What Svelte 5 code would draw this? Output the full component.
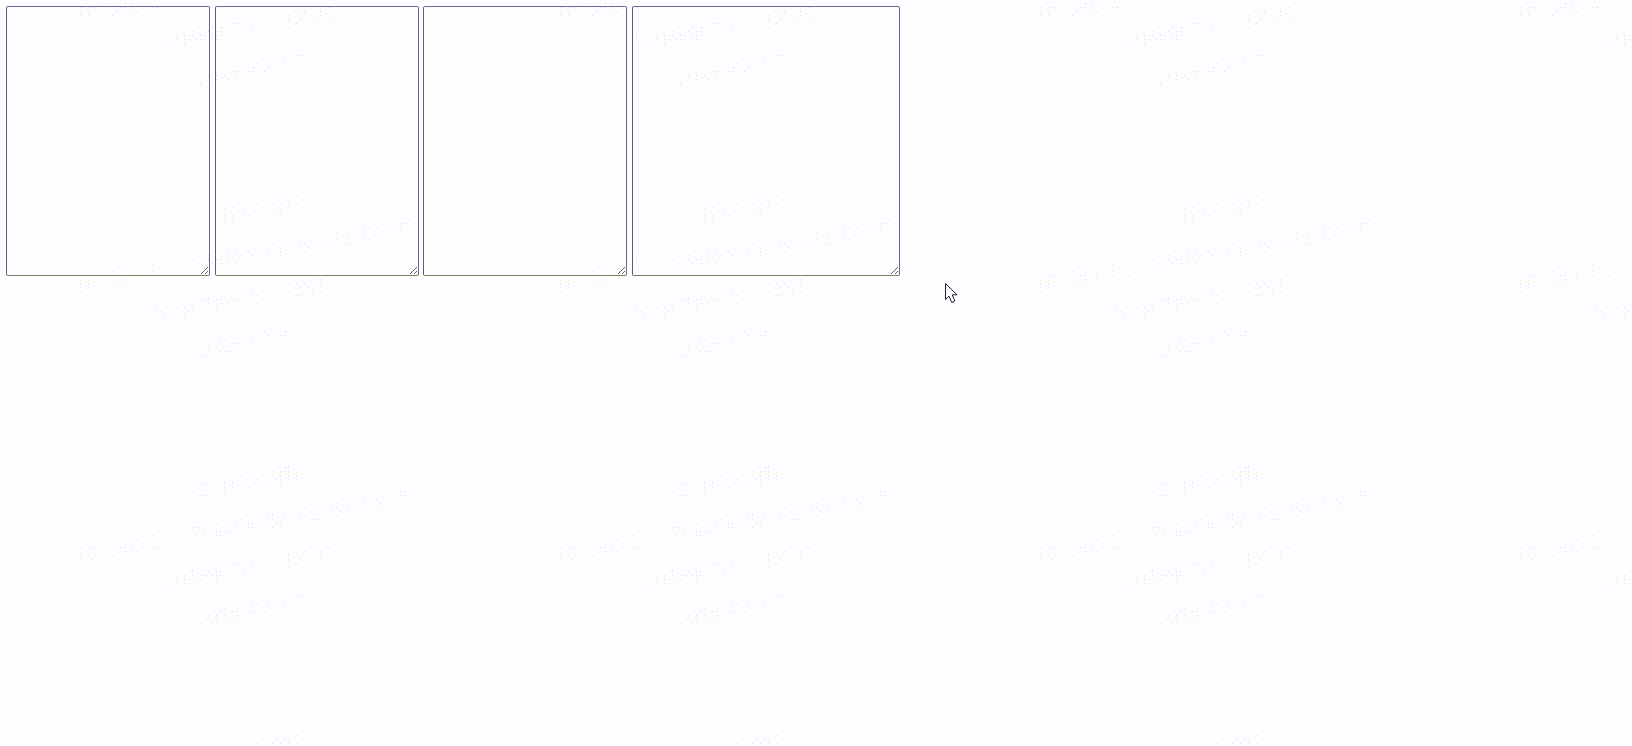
<script>
  // faint dither specks behind the page, read off as [row, purple xs, yellow xs] in 3x crop units
  const block_a = [
    [82, [673, 685], []],
    [94, [637, 661, 673, 685], [613, 637, 661, 685, 709]],
    [106, [541, 577, 637, 661, 685, 709], []],
    [118, [481, 589, 649, 661, 685, 709], [661, 685]],
    [130, [421, 433, 493, 517, 553, 601, 625, 661], []],
    [142, [385, 409, 457, 493, 517, 565], [445, 493, 517, 565]],
    [154, [385, 397, 493, 1009, 1021, 1057], []],
    [166, [421, 433, 1021, 1033], [1021]],
    [178, [913, 949], []],
    [190, [817, 829, 865, 889, 913, 961, 1009], [949, 1021]],
    [202, [733, 769, 817, 829, 865, 913, 961], []],
    [214, [817, 841, 865, 889], [853]],
    [226, [625, 637, 673, 697, 721, 733, 829], []],
    [238, [529, 541, 601, 625, 637, 673, 721, 757, 769], [661]],
    [250, [469, 505, 529, 565, 577, 625, 649, 661, 697], []],
    [262, [397, 409, 433, 529, 565, 577, 601, 637], [397, 469]],
    [274, [433, 469, 481, 493, 505], []],
    [286, [277, 313, 409, 433, 457, 469, 481], [469]],
    [298, [229, 289, 385, 409], []],
    [310, [145, 193, 217], [277]],
    [322, [61, 85, 97, 181, 193, 217, 277, 289, 805], []],
    [334, [169, 193, 217, 229, 721, 733, 769, 781], [61, 85, 205, 709, 733, 781]],
    [346, [61, 85, 121, 157, 685, 781], []],
    [358, [97, 625, 685, 721, 769, 817], [589, 685, 757, 805]],
    [370, [517, 529, 553, 577, 709, 745], []],
    [382, [457, 481, 577, 673, 685], []],
    [394, [397, 445, 469, 481, 553, 577], []],
    [406, [373, 397, 421, 433, 457, 469, 481, 553], [325, 349, 373, 397, 469, 517]],
    [418, [289, 349, 373, 385, 409, 421, 457, 469], []],
    [430, [373], [373, 397]],
    [442, [313, 337], []],
    [466, [709, 721], []],
    [478, [673], []],
    [490, [577, 589, 625, 673], []],
    [502, [577, 625, 673], [493]],
    [514, [481, 517, 529, 553, 565, 577, 613], []],
    [526, [433, 445, 469, 493, 529], [445, 469, 493, 517, 589]],
    [538, [469, 505, 529], []],
    [550, [421, 457], [421]],
  ];

  const block_b = [
    [16, [709], []],
    [28, [649, 673], [685]],
    [40, [577, 589, 637, 661, 685, 709], []],
    [52, [505, 517], [493, 589, 637, 661, 685, 709]],
    [64, [481, 553, 649, 661], []],
    [76, [385, 493, 517, 553, 565], [469, 493, 517, 565, 589]],
    [88, [385, 493, 517, 1045], []],
    [100, [1009, 1021, 1033], [421, 1021]],
    [112, [913, 925, 949, 985, 1021], []],
    [124, [841, 913, 1009], [829, 1045]],
    [136, [769, 865, 913, 961, 985], []],
    [148, [721, 793, 829, 865, 913, 925], [853, 925]],
    [160, [637, 673, 721, 733, 817, 853, 865], []],
    [172, [625, 721, 745, 793], [637, 661, 757]],
    [184, [505, 529, 565, 601, 625, 661, 733], []],
    [196, [433, 445, 505, 529, 541, 577, 625, 661], [517]],
    [208, [397, 433, 445, 469, 481, 505, 577], []],
    [220, [289, 313, 457, 481, 505, 529], [277, 493, 517]],
    [232, [313, 409, 433], []],
    [244, [157, 193, 277, 385], [229]],
    [256, [85, 97, 145, 181, 193, 229, 277, 325], []],
    [268, [193, 769, 781], [61, 85, 157, 181, 229, 781]],
    [280, [61, 85, 169, 193, 685, 709, 733, 781], []],
    [292, [61, 85, 121, 625, 673, 721, 745], [613, 709, 757]],
    [304, [61, 577, 685, 757, 781], []],
    [316, [577, 589, 709, 721], [493, 685]],
    [328, [421, 433, 445, 469, 481, 517, 529], []],
    [340, [361, 445, 481, 505, 589, 649], [397, 421, 469, 517, 565]],
    [352, [289, 349, 373, 397, 469], []],
    [364, [289, 301, 385, 457], [373, 421]],
    [376, [313, 337, 361, 373], []],
    [388, [313], [301]],
    [412, [673], [685]],
    [424, [613, 673], []],
    [436, [577, 625, 649, 661, 673], [637]],
    [448, [481, 493, 577], []],
    [460, [433, 481, 517, 529, 577], [445, 469, 613]],
    [472, [433, 445, 469, 529], []],
    [484, [481, 493, 505], [469, 493]],
    [496, [421, 433], []],
  ];

  const to_specks = (rows, top) => {
    let specks = [];
    for (const [row, purple, yellow] of rows) {
      const y = top + Math.floor(row / 3);
      for (const x of purple) specks.push({ x: 60 + Math.floor(x / 3), y, fill: "#d9d6ff" });
      for (const x of yellow) specks.push({ x: 60 + Math.floor(x / 3), y: y + 1, fill: "#ffff9c" });
    }
    return specks;
  };

  const specks = [...to_specks(block_b, 190), ...to_specks(block_a, 440)];
  const boxes = ["first", "second", "third", "fourth"];
</script>

<svg class="specks" width="1632" height="746" aria-hidden="true">
  <defs>
    <pattern id="dither" x="0" y="100" width="480" height="540" patternUnits="userSpaceOnUse">
      {#each specks as s}
        <rect x={s.x} y={s.y - 100} width="1" height="1" fill={s.fill} />
      {/each}
    </pattern>
  </defs>
  <rect width="1632" height="746" fill="url(#dither)" />
</svg>

<main class="row">
  {#each boxes as size}
    <textarea class={size}></textarea>
  {/each}
</main>

<svg class="pointer" width="14" height="21" viewBox="0 0 14 21" aria-hidden="true">
  <path d="M0.5 0.5V16.5L4 13.2L6.8 19.5L9.8 18L7.2 11.8H12Z" fill="#fff" stroke="#1d1a3a" stroke-width="1" />
</svg>

<style>
  :global(body) {
    background: #fdfdff;
    height: 746px;
    overflow: hidden;
  }

  .specks {
    position: absolute;
    top: 0;
    left: 0;
    pointer-events: none;
    shape-rendering: crispEdges;
  }

  .row {
    position: relative;
    display: flex;
    gap: 4px;
    padding: 6px;
  }

  textarea {
    box-sizing: border-box;
    height: 270px;
    margin: 0;
    padding: 2px;
    background: transparent;
    border: 1px solid;
    border-color: #6f6ba0 #67678c #7d7d5e #5f5f6c;
    border-radius: 2px;
  }

  .first {
    width: 204px;
    margin-right: 1px;
  }

  .second {
    width: 204px;
  }

  .third {
    width: 204px;
    margin-right: 1px;
  }

  .fourth {
    width: 268px;
  }

  .pointer {
    position: absolute;
    top: 283px;
    left: 945px;
  }
</style>
